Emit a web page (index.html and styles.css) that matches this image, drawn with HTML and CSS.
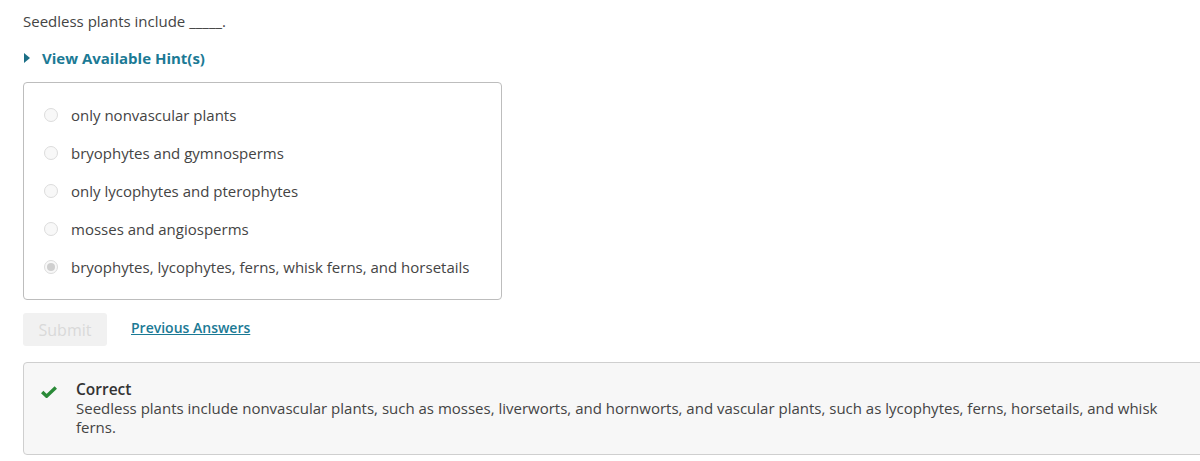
FILE: index.html
```html
<!DOCTYPE html>
<html>
<head>
<meta charset="utf-8">
<link rel="stylesheet" href="styles.css">
</head>
<body>
<div class="page">
  <p class="question">Seedless plants include _____.</p>
  <div class="hint">
    <span class="tri"></span>
    <span class="hint-text">View Available Hint(s)</span>
  </div>
  <div class="options">
    <label class="opt"><span class="radio"></span><span>only nonvascular plants</span></label>
    <label class="opt"><span class="radio"></span><span>bryophytes and gymnosperms</span></label>
    <label class="opt"><span class="radio"></span><span>only lycophytes and pterophytes</span></label>
    <label class="opt"><span class="radio"></span><span>mosses and angiosperms</span></label>
    <label class="opt"><span class="radio checked"></span><span>bryophytes, lycophytes, ferns, whisk ferns, and horsetails</span></label>
  </div>
  <div class="actions">
    <span class="submit">Submit</span>
    <a class="prev">Previous Answers</a>
  </div>
  <div class="feedback">
    <svg class="check" width="16" height="12" viewBox="0 0 16 12"><path d="M1.2 6 L5.6 10.2 L14.8 1.4" fill="none" stroke="#2a8a38" stroke-width="3.4"/></svg>
    <div class="fb-text">
      <div class="fb-title">Correct</div>
      <div class="fb-body">Seedless plants include nonvascular plants, such as mosses, liverworts, and hornworts, and vascular plants, such as lycophytes, ferns, horsetails, and whisk ferns.</div>
    </div>
  </div>
</div>
</body>
</html>
```
FILE: styles.css
```css
html, body { margin: 0; padding: 0; overflow: hidden; background: #fff; }
body { font-family: "Open Sans", "Noto Sans", sans-serif; font-size: 15px; color: #444; }
.page { padding: 11px 0 0 23px; }
.question { margin: 0; line-height: 20px; height: 20px; }
.hint { display: flex; align-items: center; margin-top: 17px; height: 20px; }
.tri { width: 0; height: 0; border-top: 5px solid transparent; border-bottom: 5px solid transparent; border-left: 6px solid #1b6f86; margin-left: 1px; }
.hint-text { margin-left: 12px; font-weight: 700; color: #1b7a95; font-size: 15px; }
.options { margin-top: 14px; width: 477px; border: 1px solid #bdbdbd; border-radius: 4px; padding: 13px 0; }
.opt { display: flex; align-items: center; height: 38px; padding-left: 20px; }
.radio { width: 14px; height: 14px; border: 1px solid #dcdcdc; border-radius: 50%; background: #f8f8f8; margin-right: 13px; box-sizing: border-box; position: relative; }
.radio.checked::after { content: ""; position: absolute; left: 2px; top: 2px; width: 8px; height: 8px; border-radius: 50%; background: #cfcfcf; }
.actions { display: flex; align-items: center; margin-top: 13px; }
.submit { width: 84px; height: 33px; background: #f1f1f1; border-radius: 3px; color: #d9d9d9; display: flex; align-items: center; justify-content: center; font-size: 16px; }
.prev { margin-left: 24px; color: #1b7a95; font-weight: 600; font-size: 14px; text-decoration: underline; margin-top: -5px; }
.feedback { margin-top: 16px; width: 1190px; height: 93px; box-sizing: border-box; border: 1px solid #cfcfcf; border-radius: 4px; background: #f7f7f7; display: flex; padding: 16px 20px 0 17px; }
.check { margin-top: 7px; flex: none; }
.fb-text { margin-left: 19px; width: 1098px; }
.fb-title { font-weight: 600; font-size: 15.5px; color: #333; line-height: 20px; }
.fb-body { line-height: 19px; }
```
